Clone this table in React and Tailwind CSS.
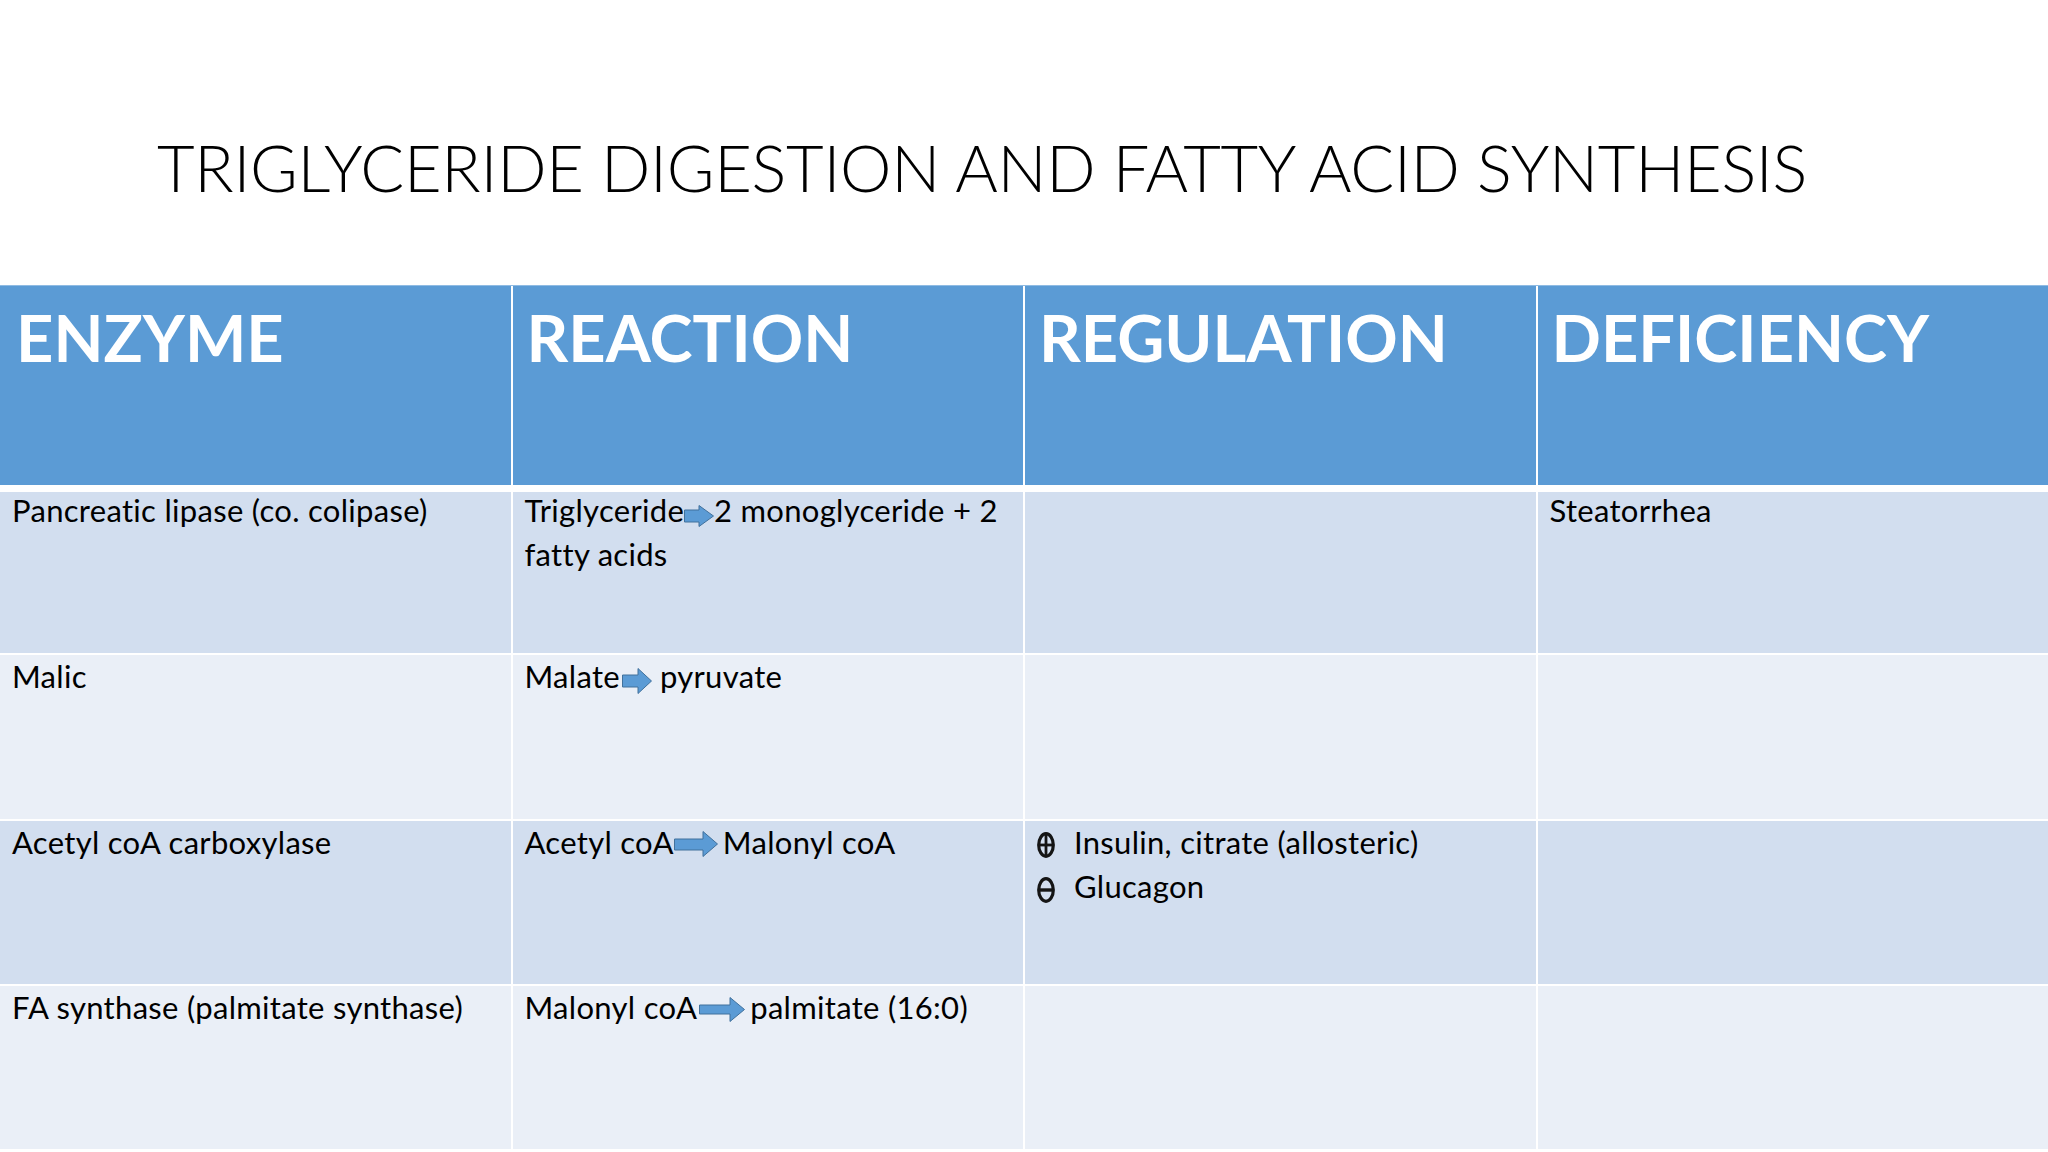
import React from "react";

function Arrow({ w, h, head, s1, s2, className }) {
  const d = `M0.5 ${s1} H${head} V0.5 L${w - 0.5} ${h / 2} L${head} ${h - 0.5} V${s2} H0.5 Z`;
  return (
    <svg width={w} height={h} viewBox={`0 0 ${w} ${h}`} className={"inline-block " + (className || "")}>
      <path d={d} fill="#5b9bd5" stroke="#41719c" strokeWidth="1" />
    </svg>
  );
}

function Plus() {
  return (
    <svg width="18" height="26" viewBox="0 0 18 26" className="inline-block align-[-4px] mr-[19px]">
      <ellipse cx="9" cy="13" rx="7.3" ry="11.3" fill="none" stroke="#151515" strokeWidth="3.2" />
      <line x1="9" y1="1.6" x2="9" y2="24.4" stroke="#151515" strokeWidth="2.8" />
      <line x1="1.6" y1="13" x2="16.4" y2="13" stroke="#151515" strokeWidth="2.8" />
    </svg>
  );
}

function Minus() {
  return (
    <svg width="18" height="26" viewBox="0 0 18 26" className="inline-block align-[-5px] mr-[19px]">
      <ellipse cx="9" cy="13" rx="7.3" ry="11.3" fill="none" stroke="#151515" strokeWidth="3.2" />
      <line x1="1.6" y1="13" x2="16.4" y2="13" stroke="#151515" strokeWidth="3.4" />
    </svg>
  );
}

const headers = ["ENZYME", "REACTION", "REGULATION", "DEFICIENCY"];

export default function App() {
  const cell = "px-[12px] text-[31px] leading-[44px] tracking-[0.3px] text-black";
  const in1 = "-mt-[4px]";
  const inner = "-mt-[1px]";
  const odd = "bg-[#d2deef]";
  const even = "bg-[#eaeff7]";
  return (
    <div className="w-[2048px] h-[1152px] bg-white overflow-hidden font-['Lato','Open_Sans',sans-serif] [font-variant-ligatures:none]">
      <div className="h-[285px] pl-[157px] pt-[128px]">
        <h1 className="text-[65px] leading-[78px] font-light tracking-[-0.3px] text-black whitespace-nowrap">
          TRIGLYCERIDE DIGESTION AND FATTY ACID SYNTHESIS
        </h1>
      </div>
      <div className="flex flex-col">
        <div className="grid grid-cols-4 gap-x-[2px] h-[200px] border-t border-[#8fbbe3]">
          {headers.map((h, i) => (
            <div
              key={h}
              className={
                "bg-[#5b9bd5] text-white font-bold text-[65px] leading-[78px] pt-[12px] " +
                (i === 0 ? "pl-[16px]" : "pl-[14px]")
              }
            >
              {h}
            </div>
          ))}
        </div>
        <div className="mt-[7px] grid grid-cols-4 gap-x-[2px] gap-y-[2px] grid-rows-[161px_164px_163px_163px]">
          {/* Row 1 */}
          <div className={`${cell} ${odd}`}>
            <div className={in1}>Pancreatic lipase (co. colipase)</div>
          </div>
          <div className={`${cell} ${odd}`}>
            <div className={in1}>
              Triglyceride
              <Arrow w={30} h={22} head={15} s1={5} s2={17} className="align-[-5px] ml-[0px] mr-[0px]" />
              2 monoglyceride + 2<br />
              fatty acids
            </div>
          </div>
          <div className={`${cell} ${odd}`}></div>
          <div className={`${cell} ${odd}`}>
            <div className={in1}>Steatorrhea</div>
          </div>
          {/* Row 2 */}
          <div className={`${cell} ${even}`}>
            <div className={inner}>Malic</div>
          </div>
          <div className={`${cell} ${even}`}>
            <div className={inner}>
              Malate
              <Arrow w={30} h={26} head={16} s1={7} s2={19} className="align-[-6px] ml-[2px] mr-[8px]" />
              pyruvate
            </div>
          </div>
          <div className={`${cell} ${even}`}></div>
          <div className={`${cell} ${even}`}></div>
          {/* Row 3 */}
          <div className={`${cell} ${odd}`}>
            <div className={inner}>Acetyl coA carboxylase</div>
          </div>
          <div className={`${cell} ${odd}`}>
            <div className={inner}>
              Acetyl coA
              <Arrow w={44} h={26} head={29} s1={8} s2={19} className="align-[-3px] ml-[0px] mr-[5px]" />
              Malonyl coA
            </div>
          </div>
          <div className={`${cell} ${odd}`}>
            <div className={inner}>
              <div>
                <Plus />
                Insulin, citrate (allosteric)
              </div>
              <div>
                <Minus />
                Glucagon
              </div>
            </div>
          </div>
          <div className={`${cell} ${odd}`}></div>
          {/* Row 4 */}
          <div className={`${cell} ${even}`}>
            <div className={inner}>FA synthase (palmitate synthase)</div>
          </div>
          <div className={`${cell} ${even}`}>
            <div className={inner}>
              Malonyl coA
              <Arrow w={46} h={25} head={31} s1={8} s2={17} className="align-[-3px] ml-[2px] mr-[5px]" />
              palmitate (16:0)
            </div>
          </div>
          <div className={`${cell} ${even}`}></div>
          <div className={`${cell} ${even}`}></div>
        </div>
      </div>
    </div>
  );
}
